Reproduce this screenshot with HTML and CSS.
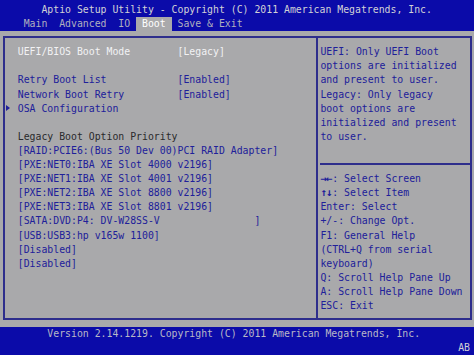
FILE: index.html
```html
<!DOCTYPE html>
<html lang="en">
<head>
<meta charset="utf-8">
<title>Aptio Setup Utility - Boot</title>
<link rel="stylesheet" href="styles.css">
</head>
<body>
<div class="screen">
  <header class="topbar">
    <div class="title">Aptio Setup Utility - Copyright (C) 2011 American Megatrends, Inc.</div>
    <nav class="tabs">
      <span class="tab">Main</span>
      <span class="tab gap2">Advanced</span>
      <span class="tab gap2">IO</span>
      <span class="tab gap1 active">Boot</span>
      <span class="tab gap1">Save &amp; Exit</span>
    </nav>
  </header>

  <main class="body">
    <div class="frame">
      <section class="settings">
        <div class="row static"><span class="mark"></span><span class="label">UEFI/BIOS Boot Mode</span><span class="value">[Legacy]</span></div>
        <div class="row blank"></div>
        <div class="row item"><span class="mark"></span><span class="label">Retry Boot List</span><span class="value">[Enabled]</span></div>
        <div class="row item"><span class="mark"></span><span class="label">Network Boot Retry</span><span class="value">[Enabled]</span></div>
        <div class="row item"><span class="mark"><i class="arrow"></i></span><span class="label">OSA Configuration</span><span class="value"></span></div>
        <div class="row blank"></div>
        <div class="row heading"><span class="mark"></span><span class="label wide">Legacy Boot Option Priority</span></div>
        <div class="row item"><span class="mark"></span><span class="label wide">[RAID:PCIE6:(Bus 50 Dev 00)PCI RAID Adapter]</span></div>
        <div class="row item"><span class="mark"></span><span class="label wide">[PXE:NET0:IBA XE Slot 4000 v2196]</span></div>
        <div class="row item"><span class="mark"></span><span class="label wide">[PXE:NET1:IBA XE Slot 4001 v2196]</span></div>
        <div class="row item"><span class="mark"></span><span class="label wide">[PXE:NET2:IBA XE Slot 8800 v2196]</span></div>
        <div class="row item"><span class="mark"></span><span class="label wide">[PXE:NET3:IBA XE Slot 8801 v2196]</span></div>
        <div class="row item"><span class="mark"></span><span class="label wide pre">[SATA:DVD:P4: DV-W28SS-V                ]</span></div>
        <div class="row item"><span class="mark"></span><span class="label wide">[USB:USB3:hp v165w 1100]</span></div>
        <div class="row item"><span class="mark"></span><span class="label wide">[Disabled]</span></div>
        <div class="row item"><span class="mark"></span><span class="label wide">[Disabled]</span></div>
      </section>

      <aside class="help">
        <div class="help-desc">
          <div class="line">UEFI: Only UEFI Boot</div>
          <div class="line">options are initialized</div>
          <div class="line">and present to user.</div>
          <div class="line">Legacy: Only legacy</div>
          <div class="line">boot options are</div>
          <div class="line">initialized and present</div>
          <div class="line">to user.</div>
        </div>
        <div class="rule"></div>
        <div class="help-keys">
          <div class="line"><b class="keys">→←</b>: Select Screen</div>
          <div class="line"><b class="keys">↑↓</b>: Select Item</div>
          <div class="line">Enter: Select</div>
          <div class="line">+/-: Change Opt.</div>
          <div class="line">F1: General Help</div>
          <div class="line">(CTRL+Q from serial</div>
          <div class="line">keyboard)</div>
          <div class="line">Q: Scroll Help Pane Up</div>
          <div class="line">A: Scroll Help Pane Down</div>
          <div class="line">ESC: Exit</div>
        </div>
      </aside>
    </div>
  </main>

  <footer class="bottombar">
    <div class="version">Version 2.14.1219. Copyright (C) 2011 American Megatrends, Inc.</div>
    <div class="kbd">AB</div>
  </footer>
</div>
</body>
</html>
```

FILE: styles.css
```css
html, body {
  margin: 0;
  padding: 0;
  width: 474px;
  height: 355px;
  overflow: hidden;
  background: #a9a9ab;
}

.screen {
  --row: 14.1px;
  --blue: #0b0ba9;
  --gray: #a9a9ab;
  --ink: #20209a;
  --line: #2e2e8c;
  font-family: "DejaVu Sans Mono", "Liberation Mono", monospace;
  font-size: 9.842px;
  line-height: var(--row);
  width: 474px;
  height: 355px;
  display: flex;
  flex-direction: column;
  background: var(--gray);
  color: var(--ink);
}

/* top bar */
.topbar {
  background: var(--blue);
  padding-top: 3px;
  height: calc(var(--row) * 2);
  flex: none;
}
.title {
  padding-left: 7ch;
  color: #d2d2d6;
  white-space: pre;
  height: var(--row);
}
.tabs {
  display: flex;
  padding-left: 4ch;
  height: var(--row);
  color: #b0b0be;
}
.tab { white-space: pre; }
.tab.gap2 { margin-left: 2ch; }
.tab.gap1 { margin-left: 1ch; }
.tab.active {
  background: var(--gray);
  color: #ffffff;
  padding: 0 1ch;
}

/* body */
.body {
  flex: 1;
  display: flex;
  flex-direction: column;
  padding: 5px 2px 7.8px 3px;
}
.frame {
  flex: 1;
  display: flex;
  border: 2px solid var(--line);
  padding: 7.1px 0 4.3px 0;
}

.settings {
  width: calc(53.5ch - 6px);
  padding-left: calc(1ch - 5px);
  border-right: 2px solid var(--line);
  margin-top: -7.1px;
  margin-bottom: -4.3px;
  padding-top: 7.1px;
  flex: none;
}
.row {
  display: grid;
  grid-template-columns: 2ch 27ch auto;
  height: var(--row);
  white-space: pre;
}
.row .wide { grid-column: 2 / 4; }
.row.static { color: #f2f2f4; }
.row.heading { color: #2a2a2c; }
.mark {
  display: flex;
  align-items: center;
}
.arrow {
  display: block;
  width: 0;
  height: 0;
  border-left: 4px solid var(--ink);
  border-top: 3.5px solid transparent;
  border-bottom: 3.5px solid transparent;
  margin-top: -1px;
}

.help {
  flex: 1;
  padding-left: 2px;
  display: flex;
  flex-direction: column;
}
.help-desc {
  height: calc(var(--row) * 8);
}
.rule {
  height: var(--row);
  box-sizing: border-box;
  padding-top: 5px;
}
.rule::before {
  content: "";
  display: block;
  height: 2px;
  background: var(--line);
}
.line {
  height: var(--row);
  white-space: pre;
}
.keys {
  font-size: 1.1em;
  line-height: 1;
  font-weight: bold;
  letter-spacing: -1px;
  margin-right: 0.8px;
}

/* bottom bar */
.bottombar {
  background: var(--blue);
  height: calc(355px - 3px - var(--row) * 23);
  flex: none;
}
.version {
  padding-left: 8ch;
  color: #b8b8c6;
  white-space: pre;
  height: var(--row);
}
.kbd {
  text-align: right;
  padding-right: 4px;
  color: #d2d2d6;
  height: var(--row);
}
```
